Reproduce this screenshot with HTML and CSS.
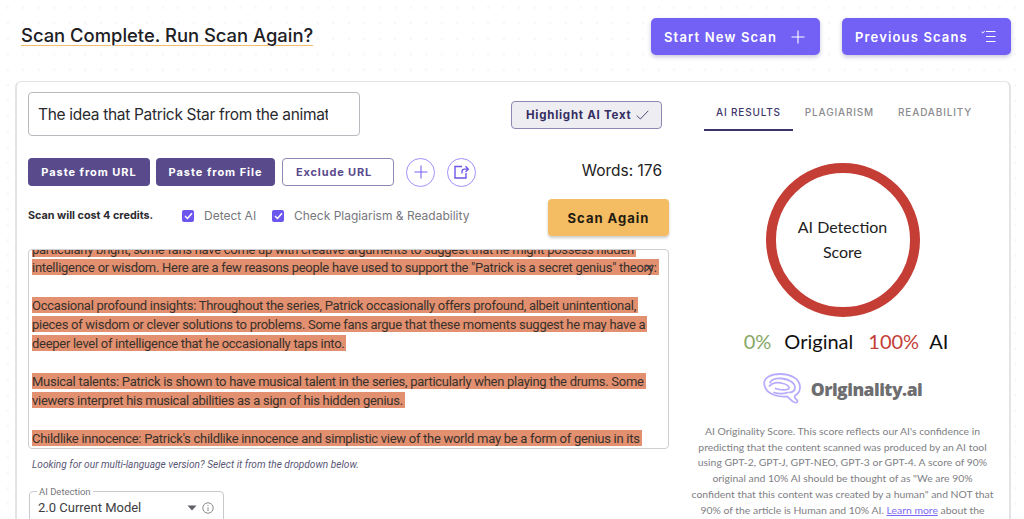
FILE: index.html
```html
<!DOCTYPE html>
<html lang="en">
<head>
<meta charset="utf-8">
<title>Scan Complete</title>
<link rel="stylesheet" href="styles.css">
</head>
<body>
<header class="top">
  <h1 class="title">Scan Complete. Run Scan Again?</h1>
  <div class="top-actions">
    <button class="btn-primary">Start New Scan
      <svg class="ico" width="14" height="14" viewBox="0 0 14 14"><path d="M7 0.5V13.5M0.5 7H13.5" stroke="#fff" stroke-width="1.1" fill="none"/></svg>
    </button>
    <button class="btn-primary">Previous Scans
      <svg class="ico" width="15" height="13" viewBox="0 0 15 13"><path d="M5 1.5H14.5M5 6.5H14.5M5 11.5H14.5" stroke="#fff" stroke-width="1" fill="none"/><path d="M0.5 2L1.8 3L3.8 0.8" stroke="#fff" stroke-width="1" fill="none"/></svg>
    </button>
  </div>
</header>
<main class="card">
  <section class="left">
    <div class="row-title">
      <div class="title-input"><span class="title-text">The idea that Patrick Star from the animated series</span></div>
      <button class="btn-highlight">Highlight AI Text
        <svg width="13" height="10" viewBox="0 0 13 10"><path d="M0.7 5.5L4.3 9L12.3 0.8" stroke="#3d3568" stroke-width="0.9" fill="none"/></svg>
      </button>
    </div>
    <div class="row-tools">
      <button class="btn-dark btn-url">Paste from URL</button>
      <button class="btn-dark btn-file">Paste from File</button>
      <button class="btn-outline">Exclude URL</button>
      <span class="round">
        <svg width="14" height="14" viewBox="0 0 14 14"><path d="M7 0.5V13.5M0.5 7H13.5" stroke="#7a63f5" stroke-width="1.1" fill="none"/></svg>
      </span>
      <span class="round">
        <svg width="15" height="14" viewBox="0 0 15 14"><path d="M8 1.5H1V13H12V8" stroke="#6b56e8" stroke-width="1.4" fill="none"/><path d="M8 8.5V6.5Q8 4.2 10.5 4.2H14M11.5 1.2L14.4 4.2L11.5 7" stroke="#6b56e8" stroke-width="1.3" fill="none"/></svg>
      </span>
      <span class="words">Words: 176</span>
    </div>
    <div class="row-scan">
      <span class="cost">Scan will cost 4 credits.</span>
      <label class="check check-ai"><span class="box"><svg width="9" height="8" viewBox="0 0 9 8"><path d="M1 4L3.5 6.5L8 1.2" stroke="#fff" stroke-width="1.5" fill="none"/></svg></span>Detect AI</label>
      <label class="check"><span class="box"><svg width="9" height="8" viewBox="0 0 9 8"><path d="M1 4L3.5 6.5L8 1.2" stroke="#fff" stroke-width="1.5" fill="none"/></svg></span>Check Plagiarism &amp; Readability</label>
      <button class="btn-scan">Scan Again</button>
    </div>
    <div class="text-box">
      <div class="text-scroll">
        <p><mark>particularly bright, some fans have come up with creative arguments to suggest that he might possess hidden</mark><br>
        <mark>intelligence or wisdom. Here are a few reasons people have used to support the "Patrick is a secret genius" theory:</mark></p>
        <p><mark>Occasional profound insights: Throughout the series, Patrick occasionally offers profound, albeit unintentional,</mark><br>
        <mark>pieces of wisdom or clever solutions to problems. Some fans argue that these moments suggest he may have a</mark><br>
        <mark>deeper level of intelligence that he occasionally taps into.</mark></p>
        <p><mark>Musical talents: Patrick is shown to have musical talent in the series, particularly when playing the drums. Some</mark><br>
        <mark>viewers interpret his musical abilities as a sign of his hidden genius.</mark></p>
        <p><mark>Childlike innocence: Patrick's childlike innocence and simplistic view of the world may be a form of genius in its</mark><br>
        <mark>own way, allowing him to see things from a unique and refreshing perspective on life.</mark></p>
      </div>
      <span class="close-x">✕</span>
    </div>
    <p class="hint">Looking for our multi-language version? Select it from the dropdown below.</p>
    <fieldset class="model">
      <legend>AI Detection</legend>
      <span>2.0 Current Model</span>
      <span class="model-icons">
        <svg width="10" height="6" viewBox="0 0 10 6"><path d="M0.5 0.5H9.5L5 5.5Z" fill="#5f5f66"/></svg>
        <svg width="12" height="12" viewBox="0 0 12 12"><circle cx="6" cy="6" r="5.2" stroke="#8a8a8a" fill="none"/><path d="M6 5.2V9M6 3V4" stroke="#8a8a8a" fill="none"/></svg>
      </span>
    </fieldset>
  </section>
  <aside class="right">
    <nav class="tabs">
      <span class="tab active">AI RESULTS</span>
      <span class="tab">PLAGIARISM</span>
      <span class="tab">READABILITY</span>
    </nav>
    <div class="ring"><span class="ring-label">AI Detection<br>Score</span></div>
    <div class="scores">
      <span class="pct-green">0%</span><span class="lbl">Original</span>
      <span class="pct-red">100%</span><span class="lbl">AI</span>
    </div>
    <div class="logo">
      <svg width="38" height="31" viewBox="0 0 38 31" fill="none" stroke="#b8adfc" stroke-width="1.8" stroke-linecap="round" stroke-linejoin="round">
        <path d="M1.2 10C1.2 4.5 8 1 17 1C28 1 37 6 37 14C37 18 35 21 32 22.5C31 24 32 25.5 34 27C35.5 28.5 34 30 32 29.5C28 28.5 27 25 24 23.5C15 24.5 6 21 3 16C1.8 14 1.2 12 1.2 10Z"/>
        <path d="M7 9.5C9 6 14 5 19 5.5C26 6 32 10 32 14.5C32 17 30 19 27 19.5"/>
        <path d="M6.5 13C9 9.5 15 9 20 10.5C24 11.5 27 13.5 26 15.5C24.5 17.5 17 17 12.5 15.5"/>
        <path d="M11 19.5C15 21 20 21 25 19.5"/>
      </svg>
      <span class="logo-text">Originality.ai</span>
    </div>
    <p class="about">AI Originality Score. This score reflects our AI's confidence in<br>predicting that the content scanned was produced by an AI tool<br>using GPT-2, GPT-J, GPT-NEO, GPT-3 or GPT-4. A score of 90%<br>original and 10% AI should be thought of as "We are 90%<br>confident that this content was created by a human" and NOT that<br>90% of the article is Human and 10% AI. <a href="#">Learn more</a> about the<br>score here and how it should be read by you.</p>
  </aside>
</main>
</body>
</html>
```
FILE: styles.css
```css
* { box-sizing: border-box; }
html, body { height: 519px; overflow: hidden; }
body {
  margin: 0;
  font-family: "Inter", "Liberation Sans", sans-serif;
  color: #1b1b1f;
  background-color: #fff;
  background-image: radial-gradient(circle, #f6f6f8 1.2px, transparent 1.6px);
  background-size: 15.5px 15.5px;
}
button { font-family: inherit; cursor: pointer; }

.top {
  display: flex;
  justify-content: space-between;
  align-items: flex-start;
  height: 81px;
  padding: 18px 13px 0 21px;
}
.title {
  margin: 5px 0 0;
  font-size: 18.4px;
  line-height: 25px;
  font-weight: 500;
  color: #202024;
  text-decoration: underline;
  text-decoration-color: #f5bd6a;
  text-decoration-thickness: 1px;
  text-underline-offset: 3px;
}
.top-actions { display: flex; gap: 22px; }
.btn-primary {
  display: flex;
  align-items: center;
  justify-content: space-between;
  width: 169px;
  height: 37px;
  padding: 0 15px 0 13px;
  border: 0;
  border-radius: 5px;
  background: #7360f5;
  color: #fff;
  font-size: 13px;
  font-weight: 600;
  letter-spacing: 1.15px;
  box-shadow: 0 2px 4px rgba(60, 50, 130, .28);
}

.card {
  display: grid;
  grid-template-columns: 655px 1fr;
  width: 996px;
  height: 460px;
  margin-left: 15px;
  padding: 10px 0 0 11px;
  background: #fff;
  border: 1px solid #e4e4e7;
  border-right-width: 2px;
  border-left-width: 2px;
  border-radius: 6px 6px 0 0;
  overflow: hidden;
}
.left { display: flex; flex-direction: column; min-width: 0; }

.row-title {
  display: flex;
  justify-content: space-between;
  align-items: center;
  width: 634px;
}
.title-input {
  width: 332px;
  height: 44px;
  padding: 0 31px 0 9px;
  border: 1px solid #b9b9bf;
  border-radius: 4px;
  font-size: 15.5px;
  letter-spacing: -.32px;
  line-height: 44px;
  color: #2a2a2e;
}
.title-text { display: block; white-space: nowrap; overflow: hidden; }
.btn-highlight {
  display: flex;
  align-items: center;
  justify-content: space-between;
  width: 151px;
  height: 28px;
  padding: 0 12px 0 14px;
  border: 1px solid #8f86b5;
  border-radius: 4px;
  background: #eeeef2;
  color: #352d62;
  font-size: 11.5px;
  font-weight: 700;
  letter-spacing: .75px;
  margin-top: 2px;
}

.row-tools {
  display: flex;
  align-items: center;
  width: 634px;
  height: 28px;
  margin-top: 22px;
}
.btn-dark, .btn-outline {
  height: 28px;
  border-radius: 4px;
  font-size: 11px;
  font-weight: 700;
  letter-spacing: .95px;
}
.btn-dark { border: 0; background: #594a8c; color: #fff; padding: 0; }
.btn-url { width: 122px; }
.btn-file { width: 119px; margin-left: 6px; }
.btn-outline {
  width: 112px;
  margin-left: 7px;
  padding: 0 0 0 13px;
  text-align: left;
  border: 1px solid #8f86b5;
  background: #fff;
  color: #594a8c;
  letter-spacing: .85px;
}
.round {
  display: flex;
  align-items: center;
  justify-content: center;
  width: 29px;
  height: 29px;
  margin-left: 12px;
  border: 1px solid #9f91fb;
  border-radius: 50%;
}
.words {
  margin-left: auto;
  margin-bottom: 3px;
  font-size: 15.5px;
  color: #222;
}

.row-scan {
  display: flex;
  align-items: center;
  width: 641px;
  height: 37px;
  margin-top: 13px;
}
.cost { width: 154px; margin-bottom: 4px; font-size: 10.8px; font-weight: 700; white-space: nowrap; color: #2b2b30; }
.check {
  display: flex;
  align-items: center;
  margin-bottom: 4px;
  font-size: 12px;
  color: #77777d;
}
.check-ai { width: 90px; }
.box {
  display: flex;
  align-items: center;
  justify-content: center;
  width: 12px;
  height: 12px;
  margin-right: 10px;
  border-radius: 2px;
  background: #6c57ee;
}
.btn-scan {
  width: 121px;
  height: 37px;
  margin-left: auto;
  border: 0;
  border-radius: 4px;
  background: #f4bc63;
  color: #1f1b10;
  font-size: 13px;
  font-weight: 700;
  letter-spacing: 1px;
  box-shadow: 0 2px 3px rgba(0, 0, 0, .2);
}

.text-box {
  position: relative;
  width: 641px;
  height: 200px;
  margin-top: 13px;
  border: 1px solid #cfcfd3;
  border-radius: 4px;
  overflow: hidden;
}
.text-scroll {
  margin-top: -9.5px;
  padding: 0 3px;
  font-family: "Roboto", "Liberation Sans", sans-serif;
  font-size: 13px;
  letter-spacing: -.28px;
  line-height: 18.9px;
  color: #39302c;
}
.text-scroll p { margin: 0 0 18.9px; white-space: nowrap; }
mark { background: #e2906f; color: inherit; padding: 1px 2px 0 0; }
.close-x {
  position: absolute;
  top: 11px;
  left: 615px;
  font-size: 12px;
  line-height: 14px;
  color: #3d3740;
}

.hint {
  margin: 10px 0 0 4px;
  font-family: "Roboto", "Liberation Sans", sans-serif;
  font-size: 10.15px;
  line-height: 12px;
  font-style: italic;
  color: #5a5676;
}
.model {
  display: flex;
  align-items: center;
  justify-content: space-between;
  width: 195px;
  height: 40px;
  margin: 16px 0 0 1px;
  padding: 4px 8px 0 8px;
  border: 1px solid #c9c9cd;
  border-radius: 4px;
  font-family: "Roboto", "Liberation Sans", sans-serif;
  font-size: 13px;
  color: #3d3d42;
}
.model legend {
  padding: 0 2px;
  margin-left: -1px;
  font-size: 9.5px;
  line-height: 9px;
  color: #77777d;
}
.model-icons { display: flex; align-items: center; gap: 5px; margin-right: 1px; }

.right {
  display: flex;
  flex-direction: column;
  align-items: center;
  padding-right: 7px;
  font-family: "Lato", "Liberation Sans", sans-serif;
}
.tabs {
  display: flex;
  align-self: flex-start;
  height: 30px;
  margin: 9px 0 0 21px;
}
.tab {
  padding: 0 12px;
  font-family: "Inter", sans-serif;
  font-size: 10px;
  line-height: 22px;
  letter-spacing: .83px;
  font-weight: 500;
  color: #8b8b90;
}
.tab.active {
  height: 30px;
  border-bottom: 2px solid #3d3568;
  color: #3d3568;
}
.ring {
  display: flex;
  align-items: center;
  justify-content: center;
  flex: none;
  width: 154px;
  height: 154px;
  margin-top: 32px;
  border: 10px solid #c43e36;
  border-radius: 50%;
  text-align: center;
  font-size: 16px;
  line-height: 25px;
  color: #222;
}
.ring-label { margin-bottom: 2px; }
.scores {
  display: flex;
  align-items: baseline;
  margin: 11px 0 0 7px;
  font-size: 20px;
  line-height: 27px;
  color: #111;
}
.pct-green { color: #87a765; margin-right: 13px; }
.pct-red { color: #c43e36; margin: 0 10px 0 15px; }
.logo {
  display: flex;
  align-items: center;
  gap: 10px;
  margin-top: 18px;
}
.logo-text {
  font-family: "Open Sans", sans-serif;
  font-size: 17.5px;
  font-weight: 800;
  letter-spacing: -.5px;
  color: #6e6e70;
}
.about {
  margin: 20px 0 0;
  width: 310px;
  flex: none;
  text-align: center;
  font-size: 10.4px;
  line-height: 15.7px;
  color: #808084;
  white-space: nowrap;
}
.about a { color: #7b68f6; }
```
